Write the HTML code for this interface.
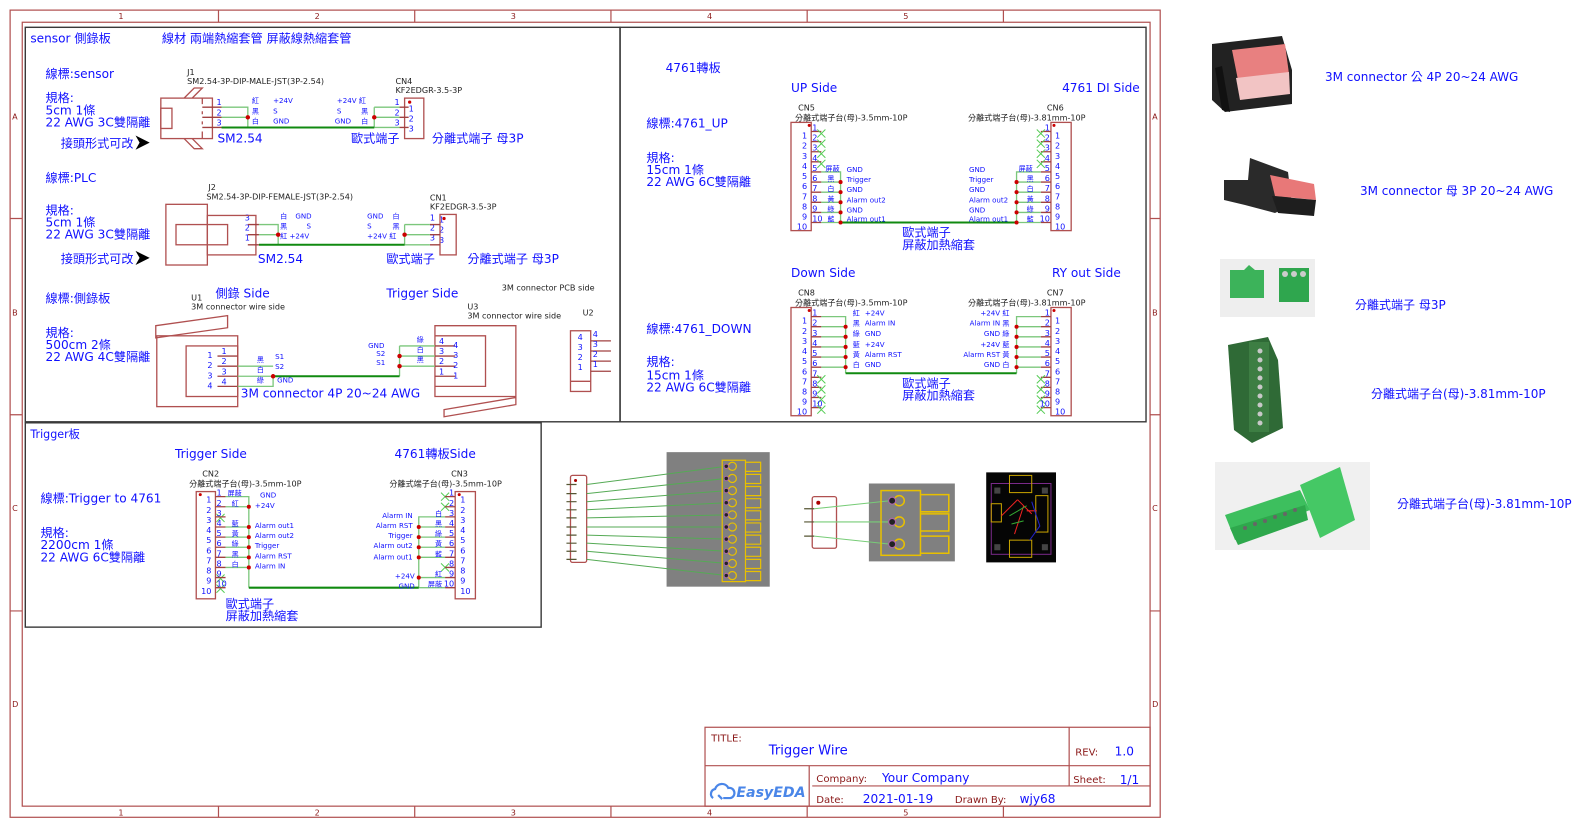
<!DOCTYPE html>
<html><head><meta charset="utf-8"><style>
html,body{margin:0;padding:0;background:#fff;width:1584px;height:827px;overflow:hidden}
svg{display:block;font-family:"DejaVu Sans","Liberation Sans","Noto Sans CJK TC",sans-serif}
.b{fill:#1010ff}
.h{font-size:12px}
.m{font-size:11px}
.s{font-size:8px}
.t{font-size:7px}
.r{fill:#8b1a1a}
.fr{stroke:#b05050;fill:none;stroke-width:1.2}
.sy{stroke:#b05050;fill:none;stroke-width:1.3}
.pn{stroke:#a04040;stroke-width:1.3}
.gw{stroke:#7cc77c;stroke-width:1.3;fill:none}
.bus{stroke:#108a10;stroke-width:2;fill:none}
.pl{stroke:#3a3a3a;fill:none;stroke-width:1.4}
.x{stroke:#5c5;stroke-width:1}
</style></head><body>
<svg width="1584" height="827" viewBox="0 0 1584 827" xmlns="http://www.w3.org/2000/svg">
<g transform="scale(1.0115)">
<rect x="10" y="10" width="1137" height="798" class="fr"/>
<rect x="22" y="22" width="1115" height="775" class="fr"/>
<g class="fr">
<path d="M216 10V22M410 10V22M604 10V22M798 10V22M992 10V22M216 797V808M410 797V808M604 797V808M798 797V808M992 797V808M10 216H22M10 410H22M10 604H22M1137 216H1147M1137 410H1147M1137 604H1147"/>
</g>
<g class="r" font-size="8">
<text x="117" y="19">1</text><text x="311" y="19">2</text><text x="505" y="19">3</text><text x="699" y="19">4</text><text x="893" y="19">5</text>
<text x="117" y="806">1</text><text x="311" y="806">2</text><text x="505" y="806">3</text><text x="699" y="806">4</text><text x="893" y="806">5</text>
<text x="12" y="118">A</text><text x="12" y="312">B</text><text x="12" y="505">C</text><text x="12" y="699">D</text>
<text x="1139" y="118">A</text><text x="1139" y="312">B</text><text x="1139" y="505">C</text><text x="1139" y="699">D</text>
</g>
<rect x="25" y="27" width="588" height="390" class="pl"/>
<rect x="613" y="27" width="520" height="390" class="pl"/>
<rect x="25" y="418" width="510" height="202" class="pl"/>

<g class="b">
<text x="30" y="42" class="h">sensor 側錄板</text>
<text x="160" y="42" class="h">線材 兩端熱縮套管 屏蔽線熱縮套管</text>
<text x="45" y="77" class="h">線標:sensor</text>
<text x="45" y="101" class="h">規格:</text>
<text x="45" y="113" class="h">5cm 1條</text>
<text x="45" y="125" class="h">22 AWG 3C雙隔離</text>
<text x="60" y="146" class="h">接頭形式可改</text>
<text x="45" y="180" class="h">線標:PLC</text>
<text x="45" y="212" class="h">規格:</text>
<text x="45" y="224" class="h">5cm 1條</text>
<text x="45" y="236" class="h">22 AWG 3C雙隔離</text>
<text x="60" y="260" class="h">接頭形式可改</text>
<text x="45" y="299" class="h">線標:側錄板</text>
<text x="45" y="333" class="h">規格:</text>
<text x="45" y="345" class="h">500cm 2條</text>
<text x="45" y="357" class="h">22 AWG 4C雙隔離</text>
<text x="215" y="141" class="h">SM2.54</text>
<text x="347" y="141" class="h">歐式端子</text>
<text x="427" y="141" class="h">分離式端子 母3P</text>
<text x="255" y="260" class="h">SM2.54</text>
<text x="382" y="260" class="h">歐式端子</text>
<text x="462" y="260" class="h">分離式端子 母3P</text>
<text x="213" y="294" class="h">側錄 Side</text>
<text x="382" y="294" class="h">Trigger Side</text>
<text x="238" y="393" class="h">3M connector 4P 20~24 AWG</text>
</g>
<path d="M134 134l14 7-14 7 4-7z" fill="#000"/>
<path d="M134 248l14 7-14 7 4-7z" fill="#000"/>
<g fill="#222" font-size="8">
<text x="185" y="74">J1</text><text x="185" y="83">SM2.54-3P-DIP-MALE-JST(3P-2.54)</text>
<text x="391" y="83">CN4</text><text x="391" y="92">KF2EDGR-3.5-3P</text>
<text x="206" y="188">J2</text><text x="204" y="197">SM2.54-3P-DIP-FEMALE-JST(3P-2.54)</text>
<text x="425" y="198">CN1</text><text x="425" y="207">KF2EDGR-3.5-3P</text>
<text x="189" y="297">U1</text><text x="189" y="306">3M connector wire side</text>
<text x="462" y="306">U3</text><text x="462" y="315">3M connector wire side</text>
<text x="496" y="287">3M connector PCB side</text>
<text x="576" y="312">U2</text>
</g>
<g class="sy">
<rect x="159" y="97" width="51" height="40"/>
<rect x="159" y="107" width="11" height="20"/>
<path d="M200 97V103M200 110V113M200 120V123M200 130V137M182 97L192 87H200L190 97M182 137L192 147H200L190 137"/>
<rect x="400" y="97" width="19" height="40"/>
</g>
<g class="pn"><path d="M200 106H219M200 116H219M200 126H219M395 106H404M395 116H404M395 126H404"/></g>
<g class="gw"><path d="M219 106H245V126M219 116H245M370 106H395M370 116H395M370 106V126H395"/></g>
<path d="M219 126H370" class="bus"/>
<g fill="#c00"><circle cx="245" cy="116" r="2.2"/><circle cx="370" cy="116" r="2.2"/><circle cx="405" cy="101" r="1.6"/><circle cx="439" cy="216" r="1.6"/></g>
<g class="b s">
<text x="214" y="104">1</text><text x="214" y="114">2</text><text x="214" y="124">3</text>
<text x="390" y="104">1</text><text x="390" y="114">2</text><text x="390" y="124">3</text>
<text x="404" y="110">1</text><text x="404" y="120">2</text><text x="404" y="130">3</text>
<text x="434" y="220">1</text><text x="434" y="230">2</text><text x="434" y="240">3</text>
<text x="425" y="218">1</text><text x="425" y="228">2</text><text x="425" y="238">3</text>
<text x="242" y="218">3</text><text x="242" y="228">2</text><text x="242" y="238">1</text>
</g>
<g class="b t">
<text x="249" y="102">紅</text><text x="249" y="112">黑</text><text x="249" y="122">白</text>
<text x="270" y="102">+24V</text><text x="270" y="112">S</text><text x="270" y="122">GND</text>
<text x="333" y="102">+24V 紅</text><text x="333" y="112">S</text><text x="357" y="112">黑</text><text x="331" y="122">GND</text><text x="357" y="122">白</text>
<text x="277" y="216">白</text><text x="292" y="216">GND</text><text x="277" y="226">黑</text><text x="303" y="226">S</text><text x="277" y="236">紅 +24V</text>
<text x="363" y="216">GND</text><text x="388" y="216">白</text><text x="363" y="226">S</text><text x="388" y="226">黑</text><text x="363" y="236">+24V 紅</text>
</g>
<g class="sy">
<rect x="164" y="202" width="41" height="60"/>
<rect x="205" y="213" width="48" height="39"/>
<rect x="174" y="222" width="51" height="20"/>
<rect x="435" y="212" width="16" height="40"/>
</g>
<g class="pn"><path d="M245 222H256M245 232H256M245 242H256M425 222H435M425 232H435M425 242H435"/></g>
<g class="gw"><path d="M256 222H275V242M256 232H275M400 222H425M400 232H425M400 222V242H425"/></g>
<path d="M256 242H400" class="bus"/>
<g fill="#c00"><circle cx="275" cy="232" r="2.2"/><circle cx="400" cy="232" r="2.2"/></g>
<g class="sy" stroke="#444">
<path d="M154 322L225 312V324L154 334Z"/>
<rect x="155" y="332" width="80" height="70"/>
<rect x="184" y="342" width="51" height="50"/>
<path d="M430 322H510V392H430ZM430 332H480V382H430M439 405L510 393V400L439 412Z"/>
<rect x="564" y="327" width="20" height="60"/><path d="M564 377H584"/>
</g>
<g class="pn"><path d="M215 352H235M215 362H235M215 372H235M215 382H235M430 342H450M430 352H450M430 362H450M430 372H450M584 337H604M584 347H604M584 357H604M584 367H604"/></g>
<g class="gw"><path d="M235 362H270M235 372H270M235 382H270V372M395 342H430M395 352H430M395 362H430M395 342V372"/></g>
<path d="M270 372H395" class="bus"/>
<g fill="#c00"><circle cx="270" cy="372" r="2.2"/><circle cx="395" cy="352" r="2.2"/><circle cx="395" cy="362" r="2.2"/></g>
<g class="b s">
<text x="205" y="354">1</text><text x="205" y="364">2</text><text x="205" y="374">3</text><text x="205" y="384">4</text>
<text x="219" y="350">1</text><text x="219" y="360">2</text><text x="219" y="370">3</text><text x="219" y="380">4</text>
<text x="434" y="340">4</text><text x="434" y="350">3</text><text x="434" y="360">2</text><text x="434" y="370">1</text>
<text x="448" y="344">4</text><text x="448" y="354">3</text><text x="448" y="364">2</text><text x="448" y="374">1</text>
<text x="571" y="336">4</text><text x="571" y="346">3</text><text x="571" y="356">2</text><text x="571" y="366">1</text>
<text x="586" y="333">4</text><text x="586" y="343">3</text><text x="586" y="353">2</text><text x="586" y="363">1</text>
</g>
<g class="b t">
<text x="254" y="358">黑</text><text x="272" y="355">S1</text><text x="254" y="368">白</text><text x="272" y="365">S2</text><text x="254" y="378">綠</text><text x="274" y="378">GND</text>
<text x="364" y="344">GND</text><text x="372" y="352">S2</text><text x="372" y="361">S1</text>
<text x="412" y="338">綠</text><text x="412" y="348">白</text><text x="412" y="358">黑</text>
</g>

<g class="b">
<text x="658" y="71" class="h">4761轉板</text>
<text x="782" y="91" class="h">UP Side</text>
<text x="1050" y="91" class="h">4761 DI Side</text>
<text x="639" y="126" class="h">線標:4761_UP</text>
<text x="639" y="160" class="h">規格:</text>
<text x="639" y="172" class="h">15cm 1條</text>
<text x="639" y="184" class="h">22 AWG 6C雙隔離</text>
<text x="892" y="234" class="h">歐式端子</text>
<text x="892" y="246" class="h">屏蔽加熱縮套</text>
<text x="782" y="274" class="h">Down Side</text>
<text x="1040" y="274" class="h">RY out Side</text>
<text x="639" y="329" class="h">線標:4761_DOWN</text>
<text x="639" y="362" class="h">規格:</text>
<text x="639" y="375" class="h">15cm 1條</text>
<text x="639" y="387" class="h">22 AWG 6C雙隔離</text>
<text x="892" y="383" class="h">歐式端子</text>
<text x="892" y="395" class="h">屏蔽加熱縮套</text>
</g>
<g fill="#222" font-size="8">
<text x="789" y="109">CN5</text><text x="786" y="119">分離式端子台(母)-3.5mm-10P</text>
<text x="1035" y="109">CN6</text><text x="957" y="119">分離式端子台(母)-3.81mm-10P</text>
<text x="789" y="292">CN8</text><text x="786" y="302">分離式端子台(母)-3.5mm-10P</text>
<text x="1035" y="292">CN7</text><text x="957" y="302">分離式端子台(母)-3.81mm-10P</text>
</g>
<g class="sy">
<rect x="782" y="121" width="20" height="107"/><rect x="1039" y="121" width="20" height="107"/>
<rect x="782" y="304" width="20" height="107"/><rect x="1039" y="304" width="20" height="107"/>
</g>
<g class="pn"><path d="M802 130H812M802 140H812M802 150H812M802 160H812M802 170H812M802 180H812M802 190H812M802 200H812M802 210H812M802 220H812M1029 130H1039M1029 140H1039M1029 150H1039M1029 160H1039M1029 170H1039M1029 180H1039M1029 190H1039M1029 200H1039M1029 210H1039M1029 220H1039"/>
<path d="M802 313H812M802 323H812M802 333H812M802 343H812M802 353H812M802 363H812M802 373H812M802 383H812M802 393H812M802 403H812M1029 313H1039M1029 323H1039M1029 333H1039M1029 343H1039M1029 353H1039M1029 363H1039M1029 373H1039M1029 383H1039M1029 393H1039M1029 403H1039"/></g>
<g class="gw"><path d="M812 170H831V220M812 180H831M812 190H831M812 200H831M812 210H831M812 220H831M1029 170H1005V220M1005 180H1029M1005 190H1029M1005 200H1029M1005 210H1029M1005 220H1029"/>
<path d="M812 313H836V369M812 323H836M812 333H836M812 343H836M812 353H836M812 363H836M1029 313H1005V369M1005 323H1029M1005 333H1029M1005 343H1029M1005 353H1029M1005 363H1029"/></g>
<path d="M831 220H1005M836 369H1005" class="bus"/>
<g fill="#c00">
<circle cx="831" cy="180" r="2"/><circle cx="831" cy="190" r="2"/><circle cx="831" cy="200" r="2"/><circle cx="831" cy="210" r="2"/><circle cx="831" cy="220" r="2"/>
<circle cx="1005" cy="180" r="2"/><circle cx="1005" cy="190" r="2"/><circle cx="1005" cy="200" r="2"/><circle cx="1005" cy="210" r="2"/><circle cx="1005" cy="220" r="2"/>
<circle cx="836" cy="323" r="2"/><circle cx="836" cy="333" r="2"/><circle cx="836" cy="343" r="2"/><circle cx="836" cy="353" r="2"/><circle cx="836" cy="363" r="2"/>
<circle cx="1005" cy="323" r="2"/><circle cx="1005" cy="333" r="2"/><circle cx="1005" cy="343" r="2"/><circle cx="1005" cy="353" r="2"/><circle cx="1005" cy="363" r="2"/>
<circle cx="800" cy="124" r="1.5"/><circle cx="1042" cy="124" r="1.5"/><circle cx="800" cy="307" r="1.5"/><circle cx="1042" cy="307" r="1.5"/>
</g>
<g class="x"><path d="M808 128l8 8M816 128l-8 8M808 138l8 8M816 138l-8 8M808 148l8 8M816 148l-8 8M808 158l8 8M816 158l-8 8M1025 128l8 8M1033 128l-8 8M1025 138l8 8M1033 138l-8 8M1025 148l8 8M1033 148l-8 8M1025 158l8 8M1033 158l-8 8M808 371l8 8M816 371l-8 8M808 381l8 8M816 381l-8 8M808 391l8 8M816 391l-8 8M808 401l8 8M816 401l-8 8M1025 371l8 8M1033 371l-8 8M1025 381l8 8M1033 381l-8 8M1025 391l8 8M1033 391l-8 8M1025 401l8 8M1033 401l-8 8"/>
<path d="M214 508l8 8M222 508l-8 8M214 568l8 8M222 568l-8 8M214 578l8 8M222 578l-8 8M436 487l8 8M444 487l-8 8M436 497l8 8M444 497l-8 8M436 557l8 8M444 557l-8 8"/></g>
<g class="b s" text-anchor="end">
<text x="798" y="137">1</text><text x="798" y="147">2</text><text x="798" y="157">3</text><text x="798" y="167">4</text><text x="798" y="177">5</text><text x="798" y="187">6</text><text x="798" y="197">7</text><text x="798" y="207">8</text><text x="798" y="217">9</text><text x="798" y="227">10</text>
<text x="798" y="320">1</text><text x="798" y="330">2</text><text x="798" y="340">3</text><text x="798" y="350">4</text><text x="798" y="360">5</text><text x="798" y="370">6</text><text x="798" y="380">7</text><text x="798" y="390">8</text><text x="798" y="400">9</text><text x="798" y="410">10</text>
<text x="1038" y="129">1</text><text x="1038" y="139">2</text><text x="1038" y="149">3</text><text x="1038" y="159">4</text><text x="1038" y="169">5</text><text x="1038" y="179">6</text><text x="1038" y="189">7</text><text x="1038" y="199">8</text><text x="1038" y="209">9</text><text x="1038" y="219">10</text>
<text x="1038" y="312">1</text><text x="1038" y="322">2</text><text x="1038" y="332">3</text><text x="1038" y="342">4</text><text x="1038" y="352">5</text><text x="1038" y="362">6</text><text x="1038" y="372">7</text><text x="1038" y="382">8</text><text x="1038" y="392">9</text><text x="1038" y="402">10</text>
</g>
<g class="b s">
<text x="803" y="129">1</text><text x="803" y="139">2</text><text x="803" y="149">3</text><text x="803" y="159">4</text><text x="803" y="169">5</text><text x="803" y="179">6</text><text x="803" y="189">7</text><text x="803" y="199">8</text><text x="803" y="209">9</text><text x="803" y="219">10</text>
<text x="803" y="312">1</text><text x="803" y="322">2</text><text x="803" y="332">3</text><text x="803" y="342">4</text><text x="803" y="352">5</text><text x="803" y="362">6</text><text x="803" y="372">7</text><text x="803" y="382">8</text><text x="803" y="392">9</text><text x="803" y="402">10</text>
<text x="1043" y="137">1</text><text x="1043" y="147">2</text><text x="1043" y="157">3</text><text x="1043" y="167">4</text><text x="1043" y="177">5</text><text x="1043" y="187">6</text><text x="1043" y="197">7</text><text x="1043" y="207">8</text><text x="1043" y="217">9</text><text x="1043" y="227">10</text>
<text x="1043" y="320">1</text><text x="1043" y="330">2</text><text x="1043" y="340">3</text><text x="1043" y="350">4</text><text x="1043" y="360">5</text><text x="1043" y="370">6</text><text x="1043" y="380">7</text><text x="1043" y="390">8</text><text x="1043" y="400">9</text><text x="1043" y="410">10</text>
</g>
<g class="b t">
<text x="816" y="169">屏蔽</text><text x="818" y="179">黑</text><text x="818" y="189">白</text><text x="818" y="199">黃</text><text x="818" y="209">綠</text><text x="818" y="219">藍</text>
<text x="837" y="170">GND</text><text x="837" y="180">Trigger</text><text x="837" y="190">GND</text><text x="837" y="200">Alarm out2</text><text x="837" y="210">GND</text><text x="837" y="219">Alarm out1</text>
<text x="958" y="170">GND</text><text x="958" y="180">Trigger</text><text x="958" y="190">GND</text><text x="958" y="200">Alarm out2</text><text x="958" y="210">GND</text><text x="958" y="219">Alarm out1</text>
<text x="1007" y="169">屏蔽</text><text x="1015" y="179">黑</text><text x="1015" y="189">白</text><text x="1015" y="199">黃</text><text x="1015" y="209">綠</text><text x="1015" y="219">藍</text>
<text x="843" y="312">紅</text><text x="855" y="312">+24V</text><text x="843" y="322">黑</text><text x="855" y="322">Alarm IN</text><text x="843" y="332">綠</text><text x="855" y="332">GND</text><text x="843" y="343">藍</text><text x="855" y="343">+24V</text><text x="843" y="353">黃</text><text x="855" y="353">Alarm RST</text><text x="843" y="363">白</text><text x="855" y="363">GND</text>
</g>
<g class="b t" text-anchor="end">
<text x="998" y="312">+24V 紅</text><text x="998" y="322">Alarm IN 黑</text><text x="998" y="332">GND 綠</text><text x="998" y="343">+24V 藍</text><text x="998" y="353">Alarm RST 黃</text><text x="998" y="363">GND 白</text>
</g>

<g class="b">
<text x="30" y="433" class="m">Trigger板</text>
<text x="173" y="453" class="h">Trigger Side</text>
<text x="390" y="453" class="h">4761轉板Side</text>
<text x="40" y="497" class="h">線標:Trigger to 4761</text>
<text x="40" y="531" class="h">規格:</text>
<text x="40" y="543" class="h">2200cm 1條</text>
<text x="40" y="555" class="h">22 AWG 6C雙隔離</text>
<text x="223" y="601" class="h">歐式端子</text>
<text x="223" y="613" class="h">屏蔽加熱縮套</text>
</g>
<g fill="#222" font-size="8">
<text x="200" y="471">CN2</text><text x="187" y="481">分離式端子台(母)-3.5mm-10P</text>
<text x="446" y="471">CN3</text><text x="385" y="481">分離式端子台(母)-3.5mm-10P</text>
</g>
<g class="sy"><rect x="194" y="486" width="19" height="106"/><rect x="450" y="486" width="20" height="106"/></g>
<g class="pn"><path d="M213 491H223M213 501H223M213 511H223M213 521H223M213 531H223M213 541H223M213 551H223M213 561H223M213 571H223M213 581H223M440 491H450M440 501H450M440 511H450M440 521H450M440 531H450M440 541H450M440 551H450M440 561H450M440 571H450M440 581H450"/></g>
<g class="gw"><path d="M223 491H246V581M223 501H246M223 521H246M223 531H246M223 541H246M223 551H246M223 561H246M440 511H414V581M414 521H440M414 531H440M414 541H440M414 551H440M414 571H440M414 581H440"/></g>
<path d="M246 581H414" class="bus"/>
<g fill="#c00">
<circle cx="246" cy="501" r="2"/><circle cx="246" cy="521" r="2"/><circle cx="246" cy="531" r="2"/><circle cx="246" cy="541" r="2"/><circle cx="246" cy="551" r="2"/><circle cx="246" cy="561" r="2"/>
<circle cx="414" cy="521" r="2"/><circle cx="414" cy="531" r="2"/><circle cx="414" cy="541" r="2"/><circle cx="414" cy="551" r="2"/><circle cx="414" cy="571" r="2"/>
<circle cx="198" cy="489" r="1.5"/><circle cx="454" cy="489" r="1.5"/>
</g>
<g class="b s" text-anchor="end">
<text x="209" y="497">1</text><text x="209" y="507">2</text><text x="209" y="517">3</text><text x="209" y="527">4</text><text x="209" y="537">5</text><text x="209" y="547">6</text><text x="209" y="557">7</text><text x="209" y="567">8</text><text x="209" y="577">9</text><text x="209" y="587">10</text>
<text x="449" y="490">1</text><text x="449" y="500">2</text><text x="449" y="510">3</text><text x="449" y="520">4</text><text x="449" y="530">5</text><text x="449" y="540">6</text><text x="449" y="550">7</text><text x="449" y="560">8</text><text x="449" y="570">9</text><text x="449" y="580">10</text>
</g>
<g class="b s">
<text x="214" y="490">1</text><text x="214" y="500">2</text><text x="214" y="510">3</text><text x="214" y="520">4</text><text x="214" y="530">5</text><text x="214" y="540">6</text><text x="214" y="550">7</text><text x="214" y="560">8</text><text x="214" y="570">9</text><text x="214" y="580">10</text>
<text x="455" y="497">1</text><text x="455" y="507">2</text><text x="455" y="517">3</text><text x="455" y="527">4</text><text x="455" y="537">5</text><text x="455" y="547">6</text><text x="455" y="557">7</text><text x="455" y="567">8</text><text x="455" y="577">9</text><text x="455" y="587">10</text>
</g>
<g class="b t">
<text x="225" y="490">屏蔽</text><text x="229" y="500">紅</text><text x="229" y="520">藍</text><text x="229" y="530">黃</text><text x="229" y="540">綠</text><text x="229" y="550">黑</text><text x="229" y="560">白</text>
<text x="257" y="492">GND</text><text x="252" y="502">+24V</text><text x="252" y="522">Alarm out1</text><text x="252" y="532">Alarm out2</text><text x="252" y="542">Trigger</text><text x="252" y="552">Alarm RST</text><text x="252" y="562">Alarm IN</text>
<text x="430" y="510">白</text><text x="430" y="520">黑</text><text x="430" y="530">綠</text><text x="430" y="540">黃</text><text x="430" y="550">藍</text><text x="430" y="570">紅</text><text x="423" y="580">屏蔽</text>
</g>
<g class="b t" text-anchor="end">
<text x="408" y="512">Alarm IN</text><text x="408" y="522">Alarm RST</text><text x="408" y="532">Trigger</text><text x="408" y="542">Alarm out2</text><text x="408" y="553">Alarm out1</text><text x="410" y="572">+24V</text><text x="410" y="582">GND</text>
</g>

<rect x="659" y="447" width="102" height="133" fill="#808080"/>
<rect x="564" y="470" width="16" height="86" rx="2" class="sy"/>
<circle cx="569" cy="475" r="1.5" fill="#a00"/>
<g stroke="#55aa55" stroke-width="1">
<path d="M580 479L718 461M580 488L718 473M580 496L718 485M580 504L718 497M580 512L718 509M580 521L718 521M580 529L718 533M580 537L718 545M580 545L718 557M580 553L718 569"/>
</g>
<g stroke="#553" stroke-width="1.2"><path d="M560 479H570M560 488H570M560 496H570M560 504H570M560 512H570M560 521H570M560 529H570M560 537H570M560 545H570M560 553H570"/></g>
<g fill="none" stroke="#e8c000" stroke-width="1.2">
<rect x="714" y="455" width="23" height="120"/>
<path d="M737 457h15v9h-15M737 469h15v9h-15M737 481h15v9h-15M737 493h15v9h-15M737 505h15v9h-15M737 517h15v9h-15M737 529h15v9h-15M737 541h15v9h-15M737 553h15v9h-15M737 565h15v9h-15"/>
<circle cx="724" cy="461" r="4"/><circle cx="724" cy="473" r="4"/><circle cx="724" cy="485" r="4"/><circle cx="724" cy="497" r="4"/><circle cx="724" cy="509" r="4"/><circle cx="724" cy="521" r="4"/><circle cx="724" cy="533" r="4"/><circle cx="724" cy="545" r="4"/><circle cx="724" cy="557" r="4"/><circle cx="724" cy="569" r="4"/>
</g>
<g fill="#222" stroke="#a6a" stroke-width="1"><circle cx="718" cy="461" r="2.2"/><circle cx="718" cy="473" r="2.2"/><circle cx="718" cy="485" r="2.2"/><circle cx="718" cy="497" r="2.2"/><circle cx="718" cy="509" r="2.2"/><circle cx="718" cy="521" r="2.2"/><circle cx="718" cy="533" r="2.2"/><circle cx="718" cy="545" r="2.2"/><circle cx="718" cy="557" r="2.2"/><circle cx="718" cy="569" r="2.2"/></g>

<rect x="859" y="478" width="85" height="77" fill="#808080"/>
<rect x="803" y="491" width="24" height="51" rx="2" class="sy"/>
<circle cx="809" cy="497" r="2" fill="#a00"/>
<g stroke="#553" stroke-width="1.2"><path d="M795 503H805M795 516H805M795 530H805"/></g>
<g stroke="#7c7" stroke-width="1"><path d="M805 503L880 495M805 516L880 516M805 530L880 538"/></g>
<g fill="none" stroke="#e8c000" stroke-width="1.5">
<rect x="871" y="485" width="39" height="64"/>
<path d="M910 489h28v17h-28M910 508h28v17h-28M910 530h28v17h-28"/>
<circle cx="889" cy="495" r="5"/><circle cx="889" cy="516" r="5"/><circle cx="889" cy="538" r="5"/>
</g>
<g fill="#222" stroke="#a6a" stroke-width="1.2"><circle cx="882" cy="495" r="3.5"/><circle cx="882" cy="516" r="3.5"/><circle cx="882" cy="538" r="3.5"/></g>

<rect x="975" y="467" width="69" height="89" fill="#050505"/>
<rect x="980" y="478" width="59" height="70" fill="none" stroke="#7a2a8a" stroke-width="1"/>
<g fill="none" stroke="#c9a400" stroke-width="1"><rect x="998" y="470" width="22" height="17"/><rect x="998" y="534" width="22" height="17"/><rect x="1024" y="490" width="12" height="36"/><rect x="980" y="498" width="10" height="18"/></g>
<g fill="#444"><rect x="983" y="482" width="6" height="6"/><rect x="1030" y="482" width="6" height="6"/><rect x="983" y="538" width="6" height="6"/><rect x="1030" y="538" width="6" height="6"/></g>
<g stroke="#e22" stroke-width="1"><path d="M990 510L1006 494M1006 494L1020 508M1003 528L1012 500M1015 505H1025"/></g>
<g stroke="#3a3" stroke-width="1"><path d="M998 510L1015 500M1000 518L1012 515"/></g>
<g stroke="#22c" stroke-width="1" fill="none"><path d="M1020 496L1028 520L1018 534"/></g>

<g class="fr">
<rect x="697" y="719" width="440" height="78"/>
<path d="M697 757H1137M803 777H1137M1057 719V777M800 757V797"/>
</g>
<g class="r" font-size="10">
<text x="703" y="733">TITLE:</text>
<text x="1063" y="747">REV:</text>
<text x="807" y="773">Company:</text>
<text x="1061" y="774">Sheet:</text>
<text x="807" y="794">Date:</text>
<text x="944" y="794">Drawn By:</text>
</g>
<g class="b">
<text x="760" y="746" font-size="13">Trigger Wire</text>
<text x="1102" y="747" font-size="12">1.0</text>
<text x="872" y="773" font-size="12">Your Company</text>
<text x="1107" y="775" font-size="12">1/1</text>
<text x="853" y="794" font-size="12">2021-01-19</text>
<text x="1008" y="794" font-size="12">wjy68</text>
</g>
<path d="M705 789a5 5 0 0 1 2-9a7 7 0 0 1 13-1a5 5 0 0 1 2 10h-7M710 786l4 4" fill="none" stroke="#4a86e8" stroke-width="2.2"/>
<text x="728" y="788" font-size="14" font-weight="bold" font-style="italic" fill="#4a86e8">EasyEDA</text>
</g>

<g>
<path d="M1212 44L1282 36L1292 70L1292 104L1225 112L1212 100Z" fill="#222"/>
<path d="M1232 50L1285 44L1289 74L1238 80Z" fill="#e88080"/>
<path d="M1236 78L1289 72L1290 94L1240 100Z" fill="#f2c4c4"/>
<path d="M1215 68L1222 110L1230 112L1222 66Z" fill="#111"/>
<text x="1325" y="81" class="b" font-size="12">3M connector 公 4P 20~24 AWG</text>

<path d="M1224 180L1248 180L1250 158L1288 172L1292 205L1275 213L1245 205L1224 200Z" fill="#2a2a2a"/>
<path d="M1270 175L1314 184L1316 200L1275 196Z" fill="#e87878"/>
<path d="M1272 196L1316 200L1314 216L1278 213Z" fill="#1e1e1e"/>
<text x="1360" y="195" class="b" font-size="12">3M connector 母 3P 20~24 AWG</text>

<rect x="1220" y="259" width="95" height="58" fill="#eeeeee"/>
<path d="M1230 270h14l5-5 6 5h9v28h-34z" fill="#3cb35a"/>
<rect x="1279" y="268" width="30" height="34" fill="#2fa64e"/>
<circle cx="1285" cy="274" r="3" fill="#ccc"/><circle cx="1294" cy="274" r="3" fill="#ccc"/><circle cx="1303" cy="274" r="3" fill="#ccc"/>
<text x="1355" y="309" class="b" font-size="12">分離式端子 母3P</text>

<path d="M1228 345L1268 337L1278 360L1283 428L1252 443L1234 430Z" fill="#2f6a36"/>
<rect x="1249" y="342" width="20" height="90" fill="#3d7e43"/>
<g fill="#c8c8c8"><circle cx="1260" cy="351" r="2.5"/><circle cx="1260" cy="360" r="2.5"/><circle cx="1260" cy="369" r="2.5"/><circle cx="1260" cy="378" r="2.5"/><circle cx="1260" cy="387" r="2.5"/><circle cx="1260" cy="396" r="2.5"/><circle cx="1260" cy="405" r="2.5"/><circle cx="1260" cy="414" r="2.5"/><circle cx="1260" cy="423" r="2.5"/></g>
<text x="1371" y="398" class="b" font-size="12">分離式端子台(母)-3.81mm-10P</text>

<rect x="1215" y="462" width="155" height="88" fill="#f0f0f0"/>
<path d="M1225 515L1300 490L1310 510L1235 540Z" fill="#3dbf5e"/>
<path d="M1230 528L1305 505L1308 520L1238 545Z" fill="#2ea84c"/>
<path d="M1300 485L1340 467L1355 520L1320 538Z" fill="#45c865"/>
<g fill="#666"><circle cx="1245" cy="528" r="2"/><circle cx="1255" cy="524" r="2"/><circle cx="1265" cy="521" r="2"/><circle cx="1275" cy="517" r="2"/><circle cx="1285" cy="514" r="2"/><circle cx="1295" cy="510" r="2"/></g>
<text x="1397" y="508" class="b" font-size="12">分離式端子台(母)-3.81mm-10P</text>
</g>
</svg>
</body></html>
